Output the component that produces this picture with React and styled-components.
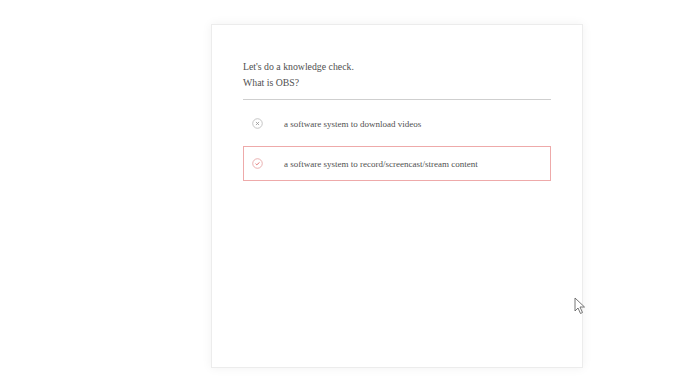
import React from 'react';
import styled, { createGlobalStyle } from 'styled-components';

const GlobalStyle = createGlobalStyle`
  html, body {
    margin: 0;
    padding: 0;
    background: #ffffff;
  }
  body {
    font-family: "Liberation Serif", "DejaVu Serif", serif;
  }
`;

const Page = styled.div`
  position: relative;
  width: 680px;
  height: 383px;
  padding: 24px 0 0 211px;
  box-sizing: border-box;
  overflow: hidden;
`;

const Card = styled.div`
  width: 372px;
  height: 344px;
  box-sizing: border-box;
  background: #ffffff;
  border: 1px solid #ececec;
  box-shadow: 0 0 10px rgba(0, 0, 0, 0.06);
  padding: 34px 31px 0 31px;
`;

const Prompt = styled.p`
  margin: 0;
  font-size: 9.8px;
  line-height: 16px;
  color: #505050;
`;

const Divider = styled.hr`
  margin: 8px 0 6px 0;
  border: none;
  border-top: 1px solid #cfcfcf;
`;

const Options = styled.div`
  display: flex;
  flex-direction: column;
  gap: 5px;
`;

const Option = styled.div`
  display: flex;
  align-items: center;
  gap: 21px;
  height: 35px;
  box-sizing: border-box;
  padding: 0 0 0 8px;
  border: 1px solid ${(p) => (p.$selected ? '#eeaaaa' : 'transparent')};
`;

const OptionText = styled.span`
  font-size: 9px;
  color: #505050;
`;

const Cursor = styled.svg`
  position: absolute;
  left: 574px;
  top: 297px;
`;

function XIcon() {
  return (
    <svg width="11" height="11" viewBox="0 0 12 12">
      <circle cx="6" cy="6" r="5.2" fill="none" stroke="#b8b8b8" strokeWidth="0.9" />
      <path d="M4.3 4.3 L7.7 7.7 M7.7 4.3 L4.3 7.7" stroke="#999" strokeWidth="0.9" />
    </svg>
  );
}

function CheckIcon() {
  return (
    <svg width="11" height="11" viewBox="0 0 12 12">
      <circle cx="6" cy="6" r="5.2" fill="none" stroke="#e6a0a0" strokeWidth="0.9" />
      <path d="M3.9 6.2 L5.3 7.4 L8.2 4.8" fill="none" stroke="#e07070" strokeWidth="1" />
    </svg>
  );
}

export default function App() {
  return (
    <Page>
      <GlobalStyle />
      <Card>
        <Prompt>Let's do a knowledge check.</Prompt>
        <Prompt>What is OBS?</Prompt>
        <Divider />
        <Options>
          <Option>
            <XIcon />
            <OptionText>a software system to download videos</OptionText>
          </Option>
          <Option $selected>
            <CheckIcon />
            <OptionText>a software system to record/screencast/stream content</OptionText>
          </Option>
        </Options>
      </Card>
      <Cursor width="12" height="18" viewBox="0 0 12 18">
        <path d="M1 1 L1 14 L4 11 L6.5 16.5 L8.5 15.5 L6 10 L10.5 10 Z" fill="#ffffff" stroke="#666" strokeWidth="0.9" />
      </Cursor>
    </Page>
  );
}
